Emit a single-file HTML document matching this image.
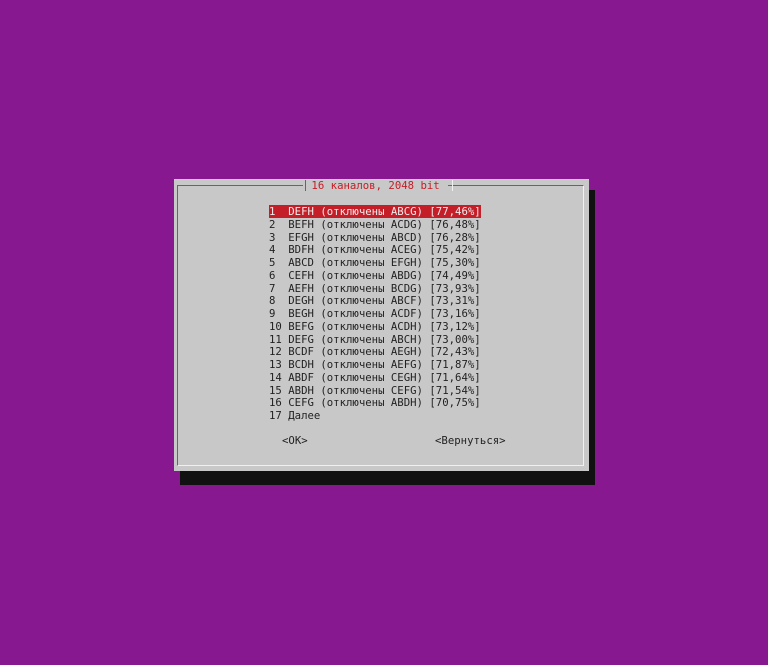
<!DOCTYPE html>
<html><head><meta charset="utf-8"><style>
html,body{margin:0;padding:0;width:768px;height:665px;overflow:hidden;background:#881890;}
.shadow{position:absolute;left:180px;top:190px;width:415px;height:295px;background:#111;}
.dlg{position:absolute;left:174px;top:179px;width:415px;height:292px;background:#c8c8c8;}
.inner{position:absolute;left:177px;top:185px;width:407px;height:281px;border-top:1px solid #666;border-left:1px solid #666;border-right:1px solid #f0f0f0;border-bottom:1px solid #f0f0f0;box-sizing:border-box;}
.t{position:absolute;font-family:"DejaVu Sans Mono","Liberation Mono",monospace;font-size:10.67px;line-height:12.75px;white-space:pre;color:#222;}
.title{left:303px;top:180px;background:#c8c8c8;color:#c41e28;padding:0 2px;}
.bar{position:absolute;top:180px;width:1px;height:11px;background:#666;}
.hl{background:#c41e28;color:#eee;}
</style></head><body>
<div class="shadow"></div>
<div class="dlg"></div>
<div class="inner"></div>
<div class="t title"> 16 каналов, 2048 bit </div>
<div class="bar" style="left:305px"></div>
<div class="bar" style="left:452px;background:#f0f0f0"></div>
<div class="t" style="left:269px;top:206px;"><span class="hl">1  DEFH (отключены ABCG) [77,46%]</span>
2  BEFH (отключены ACDG) [76,48%]
3  EFGH (отключены ABCD) [76,28%]
4  BDFH (отключены ACEG) [75,42%]
5  ABCD (отключены EFGH) [75,30%]
6  CEFH (отключены ABDG) [74,49%]
7  AEFH (отключены BCDG) [73,93%]
8  DEGH (отключены ABCF) [73,31%]
9  BEGH (отключены ACDF) [73,16%]
10 BEFG (отключены ACDH) [73,12%]
11 DEFG (отключены ABCH) [73,00%]
12 BCDF (отключены AEGH) [72,43%]
13 BCDH (отключены AEFG) [71,87%]
14 ABDF (отключены CEGH) [71,64%]
15 ABDH (отключены CEFG) [71,54%]
16 CEFG (отключены ABDH) [70,75%]
17 Далее</div>
<div class="t" style="left:282px;top:435px;">&lt;OK&gt;</div>
<div class="t" style="left:435px;top:435px;">&lt;Вернуться&gt;</div>
</body></html>
